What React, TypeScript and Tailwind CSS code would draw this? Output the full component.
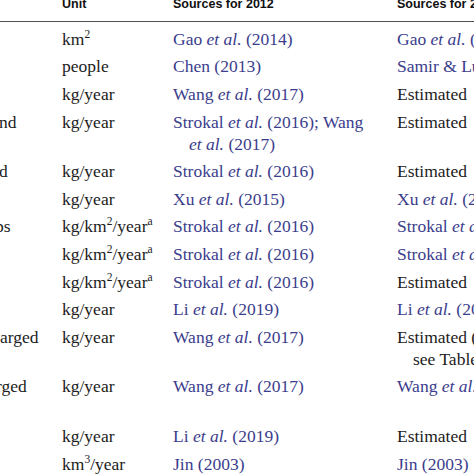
import type { ReactNode } from "react";

// 表の断片（左右が切れた状態）を再現
const LINK = "text-[#3b3d8c]";

type Row = {
  left?: ReactNode;
  unit: ReactNode;
  src: ReactNode[];
  right: ReactNode[];
  lines?: number;
};

const Et = () => <i>et al.</i>;

const Sup = ({ children }: { children: ReactNode }) => (
  <sup className="text-[11.5px] -top-[7px]">{children}</sup>
);

const KgKm2 = () => (
  <span>
    kg/km<Sup>2</Sup>/year<Sup>a</Sup>
  </span>
);

const rows: Row[] = [
  {
    unit: (
      <span>
        km<Sup>2</Sup>
      </span>
    ),
    src: [<span className={LINK}>Gao <Et /> (2014)</span>],
    right: [<span className={LINK}>Gao <Et /> (2014)</span>],
  },
  {
    unit: "people",
    src: [<span className={LINK}>Chen (2013)</span>],
    right: [<span className={LINK}>Samir &amp; Lutz (2014)</span>],
  },
  {
    unit: "kg/year",
    src: [<span className={LINK}>Wang <Et /> (2017)</span>],
    right: ["Estimated"],
  },
  {
    left: <span className="-ml-[1px]">nd</span>,
    unit: "kg/year",
    src: [
      <span className={LINK}>
        Strokal <Et /> (2016); Wang
      </span>,
      <span className={`${LINK} pl-4`}>
        <Et /> (2017)
      </span>,
    ],
    right: ["Estimated"],
    lines: 2,
  },
  {
    left: <span className="-ml-[1px]">d</span>,
    unit: "kg/year",
    src: [<span className={LINK}>Strokal <Et /> (2016)</span>],
    right: ["Estimated"],
  },
  {
    unit: "kg/year",
    src: [<span className={LINK}>Xu <Et /> (2015)</span>],
    right: [<span className={LINK}>Xu <Et /> (2015)</span>],
  },
  {
    left: <span className="-ml-[5px]">ps</span>,
    unit: <KgKm2 />,
    src: [<span className={LINK}>Strokal <Et /> (2016)</span>],
    right: [<span className={LINK}>Strokal <Et /> (2016)</span>],
  },
  {
    unit: <KgKm2 />,
    src: [<span className={LINK}>Strokal <Et /> (2016)</span>],
    right: [<span className={LINK}>Strokal <Et /> (2016)</span>],
  },
  {
    unit: <KgKm2 />,
    src: [<span className={LINK}>Strokal <Et /> (2016)</span>],
    right: ["Estimated"],
  },
  {
    unit: "kg/year",
    src: [<span className={LINK}>Li <Et /> (2019)</span>],
    right: [<span className={LINK}>Li <Et /> (2019)</span>],
  },
  {
    left: <span>arged</span>,
    unit: "kg/year",
    src: [<span className={LINK}>Wang <Et /> (2017)</span>],
    right: ["Estimated (2050);", <span className="pl-4">see Table 2</span>],
    lines: 2,
  },
  {
    left: <span className="-ml-[4px]">rged</span>,
    unit: "kg/year",
    src: [<span className={LINK}>Wang <Et /> (2017)</span>],
    right: [<span className={LINK}>Wang <Et /> (2017)</span>],
    lines: 2,
  },
  {
    unit: "kg/year",
    src: [<span className={LINK}>Li <Et /> (2019)</span>],
    right: ["Estimated"],
  },
  {
    unit: (
      <span>
        km<Sup>3</Sup>/year
      </span>
    ),
    src: [<span className={LINK}>Jin (2003)</span>],
    right: [<span className={LINK}>Jin (2003)</span>],
  },
];

export default function App() {
  return (
    <div className="w-[474px] h-[474px] overflow-hidden bg-white text-[#1c1c1c]">
      {/* ヘッダー行（上端が切れている） */}
      <div className="h-[22px] border-b-[1.5px] border-[#505050] flex whitespace-nowrap font-['Liberation_Sans',Arial,sans-serif] font-bold text-[12.5px] leading-[14px] text-[#111]">
        <div className="w-[62px] shrink-0" />
        <div className="w-[111px] shrink-0 -mt-[3px]">Unit</div>
        <div className="w-[224px] shrink-0 -mt-[3px]">Sources for 2012</div>
        <div className="shrink-0 -mt-[3px]">Sources for 2050</div>
      </div>

      {/* 本体 */}
      <div className="pt-[3px] font-['Liberation_Serif','Times_New_Roman',serif] text-[17.5px] leading-[22px] whitespace-nowrap">
        {rows.map((r, i) => (
          <div key={i} className="flex py-[2.8px]">
            <div className="w-[62px] shrink-0 flex flex-col">{r.left}</div>
            <div className="w-[111px] shrink-0 flex flex-col">{r.unit}</div>
            <div className="w-[224px] shrink-0 flex flex-col">
              {r.src.map((s, j) => (
                <div key={j}>{s}</div>
              ))}
            </div>
            <div className="shrink-0 flex flex-col">
              {r.right.map((s, j) => (
                <div key={j}>{s}</div>
              ))}
              {r.lines === 2 && r.right.length < 2 && r.src.length < 2 && <div>&nbsp;</div>}
            </div>
          </div>
        ))}
      </div>
    </div>
  );
}
